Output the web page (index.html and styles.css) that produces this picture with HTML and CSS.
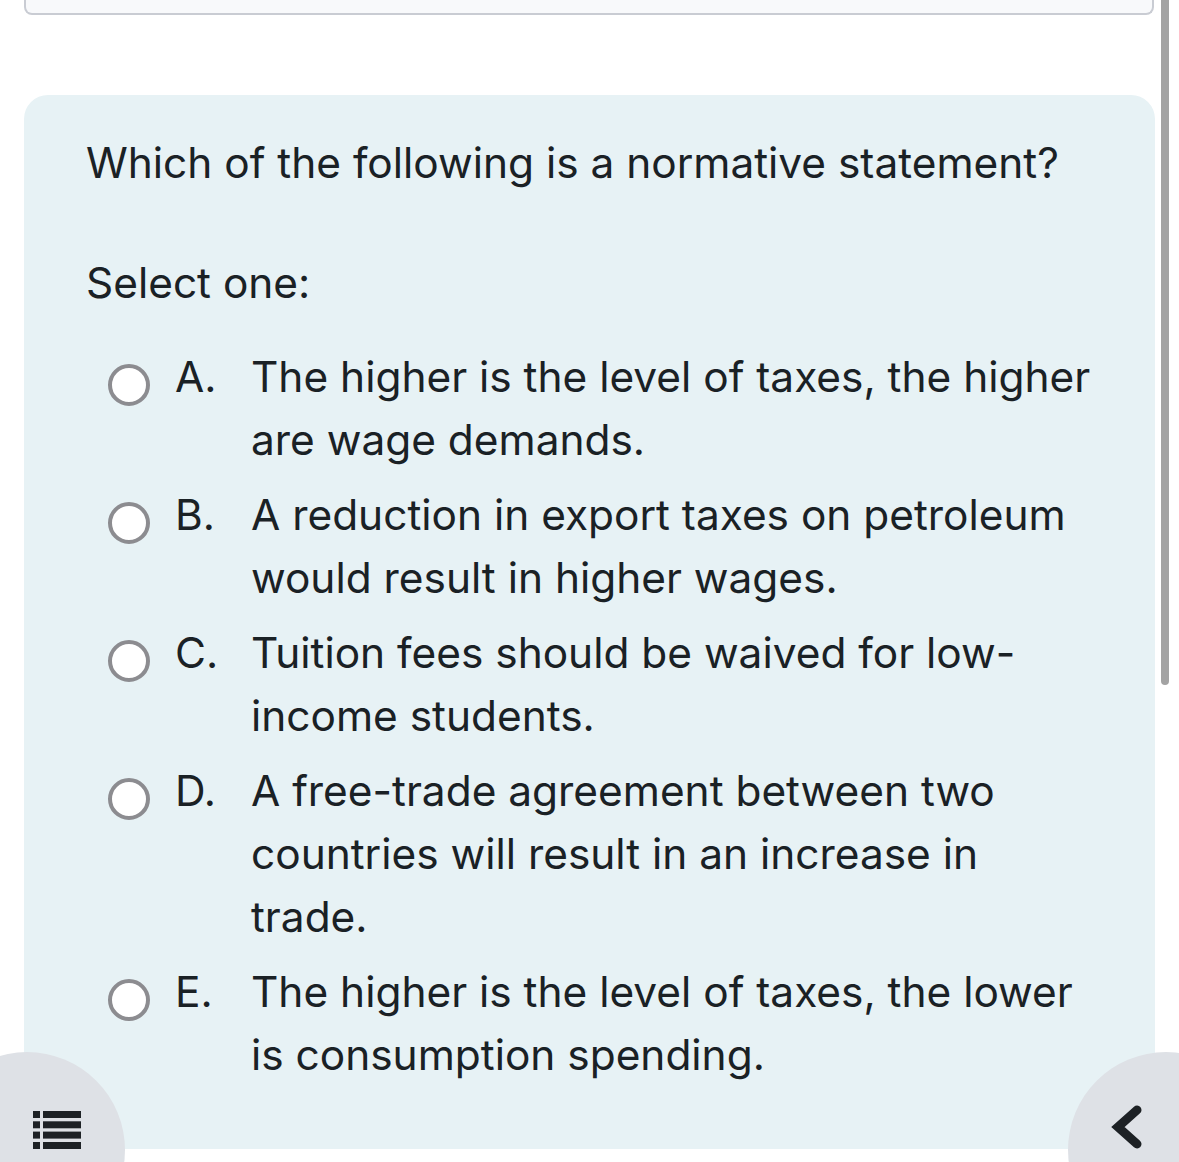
FILE: index.html
```html
<!DOCTYPE html>
<html lang="en">
<head>
<meta charset="utf-8">
<title>Question</title>
<link rel="stylesheet" href="styles.css">
</head>
<body>
<div class="page">
  <div class="info-card"></div>
  <div class="formulation">
    <div class="qtext">Which of the following is a normative statement?</div>
    <div class="prompt">Select one:</div>
    <div class="answers">
      <div class="answer">
        <span class="radio"></span>
        <span class="letter">A.</span>
        <span class="text">The higher is the level of taxes, the higher are wage demands.</span>
      </div>
      <div class="answer">
        <span class="radio"></span>
        <span class="letter">B.</span>
        <span class="text">A reduction in export taxes on petroleum would result in higher wages.</span>
      </div>
      <div class="answer">
        <span class="radio"></span>
        <span class="letter">C.</span>
        <span class="text">Tuition fees should be waived for low-income students.</span>
      </div>
      <div class="answer">
        <span class="radio"></span>
        <span class="letter">D.</span>
        <span class="text">A free-trade agreement between two countries will result in an increase in trade.</span>
      </div>
      <div class="answer">
        <span class="radio"></span>
        <span class="letter">E.</span>
        <span class="text">The higher is the level of taxes, the lower is consumption spending.</span>
      </div>
    </div>
  </div>
</div>
<div class="scrollbar"></div>
<div class="fab fab-left">
  <svg class="fab-icon" width="50" height="40" viewBox="0 0 50 40">
    <rect x="0" y="0" width="7" height="7" fill="#1d2125"/>
    <rect x="10" y="0" width="38" height="7" fill="#1d2125"/>
    <rect x="0" y="10.3" width="7" height="7" fill="#1d2125"/>
    <rect x="10" y="10.3" width="38" height="7" fill="#1d2125"/>
    <rect x="0" y="20.6" width="7" height="7" fill="#1d2125"/>
    <rect x="10" y="20.6" width="38" height="7" fill="#1d2125"/>
    <rect x="0" y="31" width="7" height="7" fill="#1d2125"/>
    <rect x="10" y="31" width="38" height="7" fill="#1d2125"/>
  </svg>
</div>
<div class="fab fab-right">
  <svg class="fab-icon" width="40" height="50" viewBox="0 0 40 50">
    <path d="M28 6 L9 23 L28 40" fill="none" stroke="#1d2125" stroke-width="9" stroke-linecap="round" stroke-linejoin="miter"/>
  </svg>
</div>
</body>
</html>
```

FILE: styles.css
```css
html, body {
  margin: 0;
  padding: 0;
  height: 1162px;
  overflow: hidden;
  background: #ffffff;
}

body {
  font-family: Inter, "Noto Sans", "Liberation Sans", sans-serif;
  color: #1a2125;
}

.page {
  padding: 0 24px;
}

.info-card {
  height: 13px;
  background: #f8f9fb;
  border: 2px solid #c9ccd3;
  border-top: none;
  border-radius: 0 0 8px 8px;
  margin-right: 1px;
}

.formulation {
  margin-top: 80px;
  background: #e7f2f5;
  border-radius: 24px;
  padding: 36px 60px 63px 62px;
}

.qtext,
.prompt,
.answer {
  font-size: 42.4px;
  line-height: 63px;
}

.prompt {
  margin-top: 57px;
}

.answers {
  margin-top: 31px;
  margin-left: 22px;
  display: flex;
  flex-direction: column;
  gap: 12px;
}

.answer {
  display: flex;
  align-items: flex-start;
}

.radio {
  flex: none;
  width: 34px;
  height: 34px;
  border: 4px solid #8c8c90;
  border-radius: 50%;
  background: #ffffff;
  margin-top: 19px;
}

.letter {
  flex: none;
  width: 76px;
  margin-left: 25px;
}

.text {
  flex: 1;
}

.scrollbar {
  position: fixed;
  top: 0;
  left: 1161px;
  width: 8px;
  height: 685px;
  background: #a3a3a3;
  border-radius: 0 0 4px 4px;
}

.fab {
  position: fixed;
  width: 196px;
  height: 196px;
  border-radius: 50%;
  background: #dee1e6;
  top: 1052px;
}

.fab-left {
  left: -71px;
}

.fab-right {
  left: 1068px;
}

.fab-icon {
  position: absolute;
}

.fab-left .fab-icon {
  left: 104px;
  top: 59px;
}

.fab-right .fab-icon {
  left: 41px;
  top: 52px;
}
```
